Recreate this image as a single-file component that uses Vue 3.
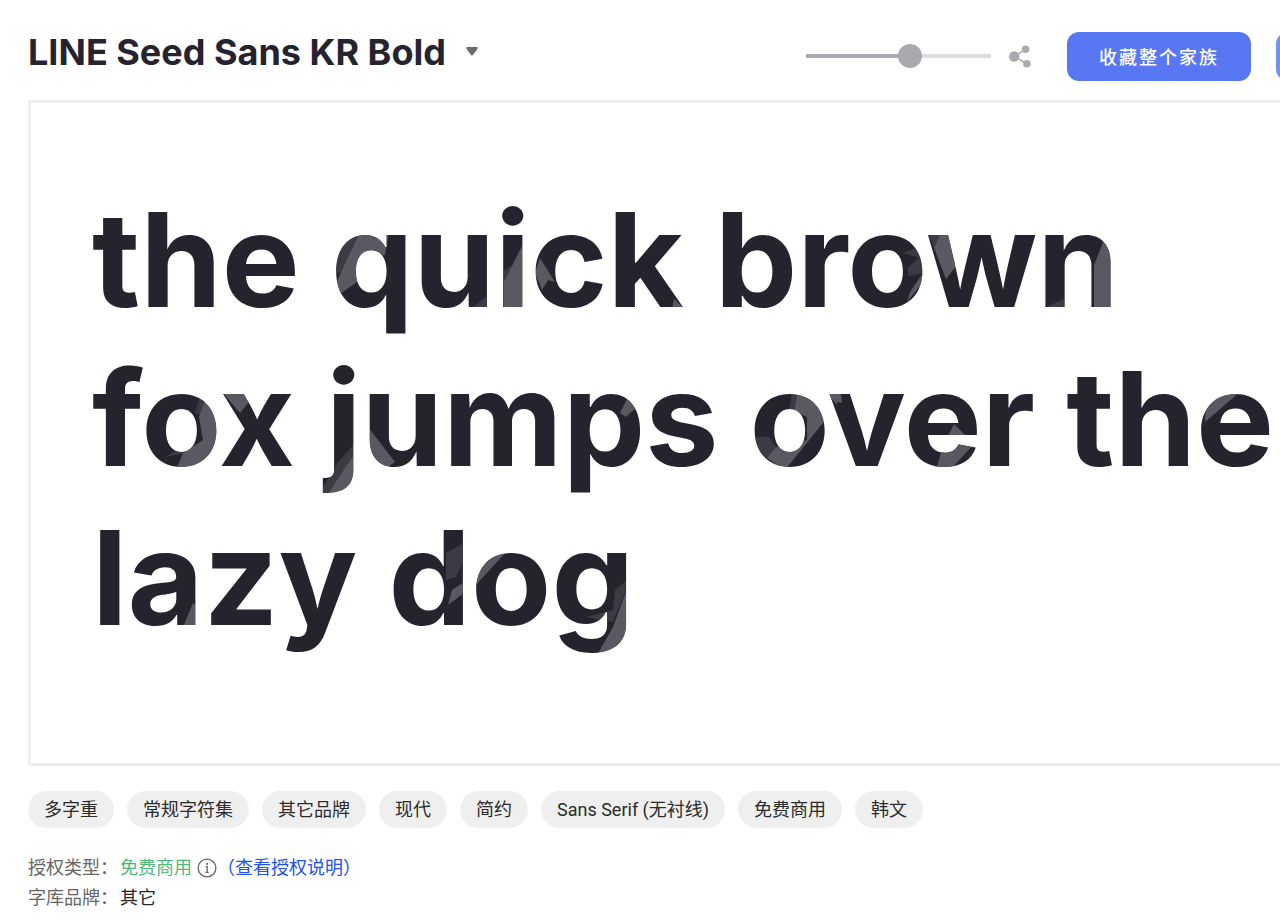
<script setup>
import { ref, computed } from 'vue'

const size = ref(57)
const track = computed(() => ({
  background: `linear-gradient(to right, #aaa9b0 ${size.value}%, #dddddd ${size.value}%) center / 100% 4px no-repeat`
}))

const lines = ['the quick brown', 'fox jumps over the', 'lazy dog']
const tags = ['多字重', '常规字符集', '其它品牌', '现代', '简约', 'Sans Serif (无衬线)', '免费商用', '韩文']

const dim = [
  '359,234 334,240 334,273 342,272',
  '512,265 503,270 503,287',
  '487,295 487,308 471,308',
  '902,253 920,246 921,255 907,268 907,276 924,273 926,260',
  '927,234 939,234 933,248',
  '1064,298 1064,308 1044,308',
  '206,402 200,393 194,413 199,415',
  '164,457 176,450 184,453',
  '352,445 335,465 325,482 315,494 327,496 341,472 352,457',
  '797,393 791,393 788,411 793,411',
  '749,437 768,437 775,447 766,458 754,454',
  '445,553 463,543 463,560 455,577 445,580',
  '630,577 614,590 612,610 585,617 612,622'
]
const bright = [
  '359,232 388,232 384,255 366,257 356,282 339,294 336,281',
  '524,240 524,311 503,311 503,282',
  '539,258 554,282 547,280 541,290 534,273',
  '673,299 684,309 671,309',
  '922,273 926,277 906,302 909,292',
  '939,234 951,234 957,264 945,279 933,248',
  '1104,238 1115,257 1115,309 1093,309 1093,265',
  '206,395 221,410 221,437 215,447 196,470 175,470 182,453 202,440 198,417',
  '222,393 242,393 248,402 239,413',
  '353,455 353,477 341,496 325,498 341,472',
  '367,427 394,462 382,470 367,452',
  '629,393 638,405 625,417 619,413',
  '797,391 825,411 822,423 784,470 766,458 775,447 806,440 806,417 793,411',
  '826,393 840,393 841,403 836,402 836,405',
  '953,424 965,436 947,436',
  '956,441 973,444 949,470 936,467 940,452',
  '1241,390 1204,422 1205,400 1220,390',
  '192,603 199,610 199,627 182,627',
  '463,582 463,593 447,605 451,590',
  '507,550 473,587 475,565 489,550',
  '630,578 630,635 616,657 595,657 612,627'
]
</script>

<template>
  <main class="page">
    <header class="top">
      <h1 class="title">LINE Seed Sans KR Bold</h1>
      <button class="more" aria-label="LINE Seed Sans KR">
        <svg width="12" height="9" viewBox="0 0 12 9"><path d="M1.5 0H10.5Q12.4 0 11.5 1.8L7.2 7.8Q6 9.2 4.8 7.8L.5 1.8Q-.4 0 1.5 0Z" fill="#6b6b6b" /></svg>
      </button>
      <div class="tools">
        <input v-model="size" class="range" type="range" min="0" max="100" aria-label="字号" :style="track" />
        <button class="share" aria-label="分享">
          <svg width="22" height="24" viewBox="0 0 22 24" fill="#aaa9b0">
            <path d="M16.5 5.3L5.2 12.5L18 19.7" fill="none" stroke="#aaa9b0" stroke-width="1.5" />
            <circle cx="5.2" cy="12.5" r="5.2" /><circle cx="16.6" cy="5.3" r="3.8" /><circle cx="17.9" cy="19.7" r="3.8" />
          </svg>
        </button>
        <button class="primary">收藏整个家族</button>
        <button class="primary next" aria-label="下载"></button>
      </div>
    </header>

    <section class="panel">
      <p class="sample"><span v-for="l in lines" :key="l" class="line">{{ l }}</span></p>
      <svg class="facets" width="1250" height="661" viewBox="30 103 1250 661" aria-hidden="true">
        <polygon v-for="p in dim" :key="p" :points="p" fill="#3c3a43" />
        <polygon v-for="p in bright" :key="p" :points="p" fill="#5a5860" />
      </svg>
    </section>

    <ul class="tags">
      <li v-for="t in tags" :key="t" class="tag">{{ t }}</li>
    </ul>

    <dl class="meta">
      <div class="row">
        <dt>授权类型：</dt>
        <dd>
          <span class="free">免费商用</span>
          <svg class="info" width="20" height="20" viewBox="0 0 20 20" fill="none" stroke="#66666c" stroke-width="1.3">
            <circle cx="10" cy="10" r="8.9" /><path d="M8.6 8.6H10.2V14.4M8.4 14.4H11.8" /><circle cx="10" cy="5.8" r=".5" fill="#66666c" />
          </svg>
          <a href="#">（查看授权说明）</a>
        </dd>
      </div>
      <div class="row"><dt>字库品牌：</dt><dd>其它</dd></div>
    </dl>
  </main>
</template>

<style>
body { background: #fff; }
</style>

<style scoped>
.page { padding-left: 28px; overflow: hidden; font-family: Inter, "Noto Sans CJK SC", sans-serif; font-size: 18px; color: #25242e; }
button { border: 0; padding: 0; background: none; font: inherit; cursor: pointer; }
.top { display: flex; align-items: center; height: 100px; }
.title { margin: 0; padding-top: 3px; font-size: 36px; line-height: 46px; font-weight: 700; white-space: nowrap; }
.more { display: flex; margin-left: 20px; padding-top: 3px; }
.tools { display: flex; flex: none; align-items: center; margin-left: auto; margin-right: -180px; padding-top: 12px; }
.range { appearance: none; width: 185px; height: 24px; margin: 0; }
.range::-webkit-slider-thumb { appearance: none; width: 24px; height: 24px; border-radius: 50%; background: #aaa9b0; }
.share { display: flex; margin: 0 36px 0 18px; }
.primary { width: 184px; height: 49px; border-radius: 12px; background: #5777f3; color: #fff; font-weight: 500; letter-spacing: 2px; }
.next { margin-left: 25px; background: #7590f7; }
.panel { position: relative; border: 3px solid #efefef; border-right: 0; padding: 77px 0 106px 61px; background: #fff; isolation: isolate; }
.sample { margin: 0; font-size: 131px; line-height: 159px; font-weight: 700; }
.line { display: block; white-space: nowrap; }
.facets { position: absolute; left: 0; top: 0; mix-blend-mode: lighten; pointer-events: none; }
.tags { display: flex; flex-wrap: wrap; gap: 13px; margin: 25px 0 0; padding: 0; list-style: none; font-family: Roboto, "Noto Sans CJK SC", sans-serif; }
.tag { padding: 0 16px; line-height: 37px; border-radius: 19px; background: #efefef; color: #2b2b2b; }
.meta { margin: 25px 0 0; padding-bottom: 6px; }
.row { display: flex; gap: 2px; line-height: 30px; }
dt { color: #666; }
dd { display: flex; align-items: center; margin: 0; }
.free { color: #52b57c; }
.info { margin-left: 5px; }
a { color: #2450f5; text-decoration: none; }
</style>
